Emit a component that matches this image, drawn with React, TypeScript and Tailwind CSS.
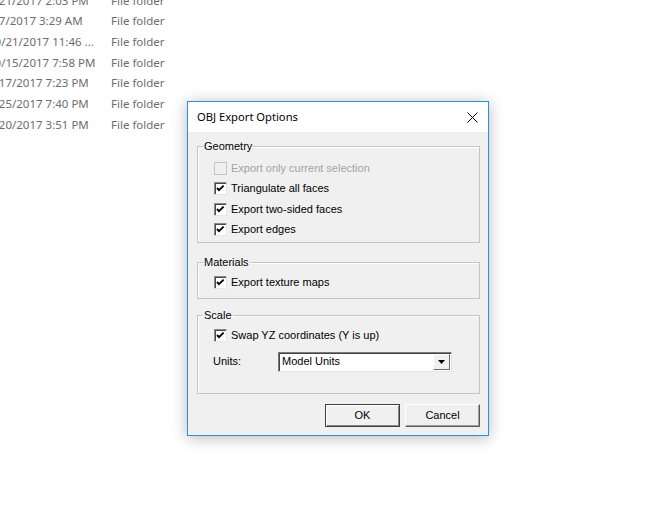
import React from 'react'

const files = [
  { date: '6/21/2017 2:03 PM' },
  { date: '6/7/2017 3:29 AM' },
  { date: '10/21/2017 11:46 ...' },
  { date: '10/15/2017 7:58 PM' },
  { date: '7/17/2017 7:23 PM' },
  { date: '7/25/2017 7:40 PM' },
  { date: '7/20/2017 3:51 PM' },
]

const ui = { fontFamily: '"Liberation Sans", Arial, sans-serif' }
const seg = { fontFamily: '"Noto Sans", "Open Sans", sans-serif' }

function Check({ checked = true, disabled = false }: { checked?: boolean; disabled?: boolean }) {
  return (
    <span
      className={`relative w-[13px] h-[13px] shrink-0 border ${
        disabled
          ? 'border-[#c4c4c4] bg-[#f0f0f0]'
          : 'border-t-[#8a8a8a] border-l-[#8a8a8a] border-b-[#e6e6e6] border-r-[#e6e6e6] bg-white shadow-[inset_1px_1px_0_#4a4a4a]'
      }`}
    >
      {checked && !disabled && (
        <svg width="11" height="11" viewBox="0 0 11 11" className="absolute left-0 top-0">
          <path d="M2 5 L4 7.2 L8.6 2.6" stroke="#000" strokeWidth="1.9" fill="none" />
        </svg>
      )}
    </span>
  )
}

function Row({ label, checked = true, disabled = false }: { label: string; checked?: boolean; disabled?: boolean }) {
  return (
    <div className="h-[20.5px] flex items-center gap-[4px] pl-[16px]">
      <Check checked={checked} disabled={disabled} />
      <span className={`text-[11px] leading-[13px] ${disabled ? 'text-[#a3a3a3]' : 'text-black'}`}>{label}</span>
    </div>
  )
}

function Group({ title, className, children }: { title: string; className: string; children: React.ReactNode }) {
  return (
    <fieldset className={`border border-[#c4c4c4] shadow-[inset_1px_1px_0_#fff] ${className}`}>
      <legend className="ml-[5px] px-[1px] text-[11px] leading-[13px] text-black">{title}</legend>
      {children}
    </fieldset>
  )
}

export default function App() {
  return (
    <div className="relative w-[648px] h-[522px] bg-white overflow-hidden" style={seg}>
      {/* explorer list behind the dialog */}
      <div className="-mt-[10px] text-[11.5px] text-[#6d6d6d]">
        {files.map((f, i) => (
          <div key={i} className="h-[20.67px] flex items-center">
            <span className="w-[111px] -ml-[12px] pl-0 whitespace-nowrap shrink-0">{f.date}</span>
            <span className="ml-[12px]">File folder</span>
          </div>
        ))}
      </div>

      {/* dialog window */}
      <div className="absolute left-[187px] top-[101px] w-[302px] h-[335px] border border-[#2b8fdf] bg-[#f0f0f0] shadow-[0_2px_14px_rgba(0,0,0,0.28)] flex flex-col">
        <div className="h-[30px] bg-white flex items-center justify-between pl-[9px] pr-[10px] shrink-0">
          <span className="text-[11.2px] text-black">OBJ Export Options</span>
          <svg width="11" height="11" viewBox="0 0 11 11">
            <path d="M0.5 0.5 L10.5 10.5 M10.5 0.5 L0.5 10.5" stroke="#000" strokeWidth="1" />
          </svg>
        </div>

        <div className="flex-1 flex flex-col pl-[9px] pr-[8px] pt-[8px]" style={ui}>
          <Group title="Geometry" className="h-[103px] pt-[5px]">
            <Row label="Export only current selection" checked={false} disabled />
            <Row label="Triangulate all faces" />
            <Row label="Export two-sided faces" />
            <Row label="Export edges" />
          </Group>

          <Group title="Materials" className="mt-[13px] h-[43px] pt-[3px]">
            <Row label="Export texture maps" />
          </Group>

          <Group title="Scale" className="mt-[10px] h-[85px] pt-[3px]">
            <Row label="Swap YZ coordinates (Y is up)" />
            <div className="mt-[6px] h-[20px] flex items-center pl-[15px]">
              <span className="w-[65px] text-[11px] text-black">Units:</span>
              <div className="w-[174px] h-[20px] flex items-center bg-white border border-t-[#7a7a7a] border-l-[#7a7a7a] border-b-[#e3e3e3] border-r-[#e3e3e3] shadow-[inset_1px_1px_0_#444]">
                <span className="flex-1 pl-[3px] text-[11px] text-black">Model Units</span>
                <div className="w-[17px] h-[16px] mr-[1px] flex items-center justify-center bg-[#f0f0f0] border border-t-white border-l-white border-b-[#6b6b6b] border-r-[#6b6b6b]">
                  <svg width="7" height="4" viewBox="0 0 7 4">
                    <path d="M0 0 H7 L3.5 4 Z" fill="#000" />
                  </svg>
                </div>
              </div>
            </div>
          </Group>

          <div className="mt-[10px] flex justify-end gap-[5px]">
            <button className="w-[75px] h-[23px] text-[11px] text-black bg-[#f0f0f0] border border-[#3e3e3e] shadow-[inset_1px_1px_0_#fff,inset_-1px_-1px_0_#8a8a8a]">
              OK
            </button>
            <button className="w-[75px] h-[23px] text-[11px] text-black bg-[#f0f0f0] border border-t-white border-l-white border-b-[#5a5a5a] border-r-[#5a5a5a] shadow-[inset_-1px_-1px_0_#a0a0a0]">
              Cancel
            </button>
          </div>
        </div>
      </div>
    </div>
  )
}
